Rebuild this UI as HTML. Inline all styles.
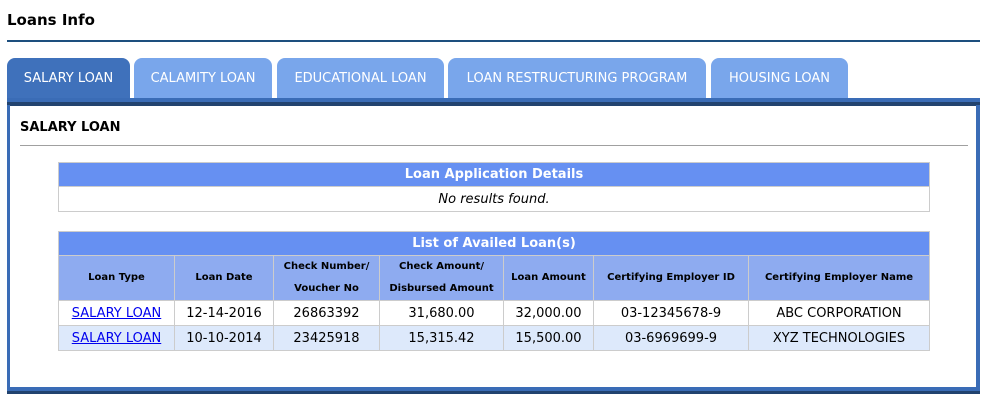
<!DOCTYPE html>
<html><head><style>
*{margin:0;padding:0;box-sizing:border-box}
body{width:988px;height:405px;background:#fff;font-family:"DejaVu Sans",Verdana,sans-serif;position:relative;overflow:hidden;color:#000}
.t{position:absolute;left:7px;top:11px;font-size:15px;font-weight:bold}
.hl{position:absolute;left:7px;top:40px;width:973px;height:2px;background:#1d4f7e}
.tab{position:absolute;top:58px;height:41px;background:#79a6eb;color:#fff;font-size:13px;text-align:center;line-height:42px;border-radius:8px 8px 0 0}
.tab.a{background:#3f71bb}
.band1{position:absolute;left:7px;top:98px;width:973px;height:4px;background:#3a6cb6}
.band2{position:absolute;left:7px;top:102px;width:973px;height:4px;background:#22436f}
.panel{position:absolute;left:7px;top:105px;width:973px;height:284px;border-left:3px solid #3a6cb6;border-right:4px solid #3a6cb6}
.bb1{position:absolute;left:7px;top:387px;width:973px;height:4px;background:#3a6cb6}
.bb2{position:absolute;left:7px;top:391px;width:973px;height:3px;background:#22436f}
.st{position:absolute;left:20px;top:120px;font-size:13px;font-weight:bold}
.gl{position:absolute;left:20px;top:145px;width:948px;height:1px;background:#a0a0a0}
table{position:absolute;left:58px;width:872px;border-collapse:collapse;font-size:13px}
td,th{border:1px solid #ccc;text-align:center}
.h1{background:#6690f2;color:#fff;font-weight:bold;height:24px}
.h2 th{background:#8eabf0;font-size:10px;line-height:22px;font-weight:bold;color:#000}
a{color:#0000ee}
tr.r td{height:25px}
tr.alt td{background:#dde9fb}
</style></head><body>
<div class="t">Loans Info</div>
<div class="hl"></div>
<div class="tab a" style="left:7px;width:123px">SALARY LOAN</div>
<div class="tab" style="left:134px;width:138px">CALAMITY LOAN</div>
<div class="tab" style="left:277px;width:167px">EDUCATIONAL LOAN</div>
<div class="tab" style="left:448px;width:258px">LOAN RESTRUCTURING PROGRAM</div>
<div class="tab" style="left:711px;width:137px">HOUSING LOAN</div>
<div class="band1"></div><div class="band2"></div>
<div class="panel"></div>
<div class="bb1"></div><div class="bb2"></div>
<div class="st">SALARY LOAN</div>
<div class="gl"></div>
<table style="top:162px">
<tr><td class="h1">Loan Application Details</td></tr>
<tr class="r"><td style="font-style:italic">No results found.</td></tr>
</table>
<table style="top:231px">
<tr><td class="h1" colspan="7">List of Availed Loan(s)</td></tr>
<tr class="h2"><th style="width:116px">Loan Type</th><th style="width:99px">Loan Date</th><th style="width:106px">Check Number/<br>Voucher No</th><th style="width:124px">Check Amount/<br>Disbursed Amount</th><th style="width:90px">Loan Amount</th><th style="width:155px">Certifying Employer ID</th><th>Certifying Employer Name</th></tr>
<tr class="r"><td><a href="#">SALARY LOAN</a></td><td>12-14-2016</td><td>26863392</td><td>31,680.00</td><td>32,000.00</td><td>03-12345678-9</td><td>ABC CORPORATION</td></tr>
<tr class="r alt"><td><a href="#">SALARY LOAN</a></td><td>10-10-2014</td><td>23425918</td><td>15,315.42</td><td>15,500.00</td><td>03-6969699-9</td><td>XYZ TECHNOLOGIES</td></tr>
</table>
</body></html>
